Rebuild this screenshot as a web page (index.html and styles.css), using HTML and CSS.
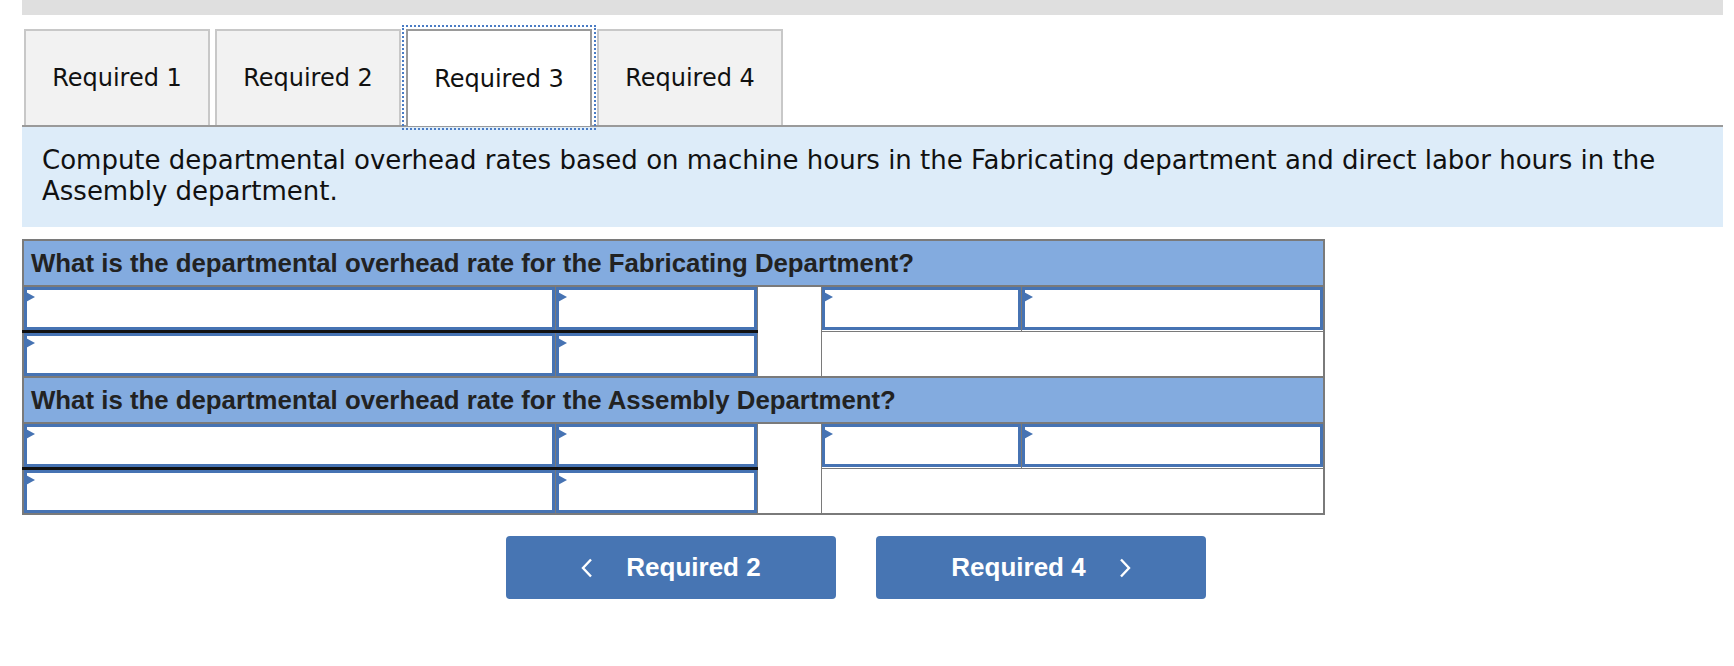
FILE: index.html
```html
<!DOCTYPE html>
<html lang="en">
<head>
<meta charset="utf-8">
<title>Required 3</title>
<link rel="stylesheet" href="styles.css">
</head>
<body>
<div class="page">
  <div class="topbar"></div>
  <div class="tabs">
    <div class="tab">Required 1</div>
    <div class="tab">Required 2</div>
    <div class="tab active">Required 3</div>
    <div class="tab">Required 4</div>
  </div>
  <div class="prompt">Compute departmental overhead rates based on machine hours in the Fabricating department and direct labor hours in the Assembly department.</div>
  <table class="grid">
    <colgroup>
      <col class="c1"><col class="c2"><col class="c3"><col class="c4"><col class="c5">
    </colgroup>
    <tr class="head"><th colspan="5">What is the departmental overhead rate for the Fabricating Department?</th></tr>
    <tr class="r1">
      <td class="sep"><div class="inp"></div></td>
      <td class="sep"><div class="inp"></div></td>
      <td rowspan="2" class="blank"></td>
      <td><div class="inp"></div></td>
      <td><div class="inp"></div></td>
    </tr>
    <tr class="r2">
      <td><div class="inp"></div></td>
      <td><div class="inp"></div></td>
      <td colspan="2" class="empty"></td>
    </tr>
    <tr class="head"><th colspan="5">What is the departmental overhead rate for the Assembly Department?</th></tr>
    <tr class="r1">
      <td class="sep"><div class="inp"></div></td>
      <td class="sep"><div class="inp"></div></td>
      <td rowspan="2" class="blank"></td>
      <td><div class="inp"></div></td>
      <td><div class="inp"></div></td>
    </tr>
    <tr class="r2">
      <td><div class="inp"></div></td>
      <td><div class="inp"></div></td>
      <td colspan="2" class="empty"></td>
    </tr>
  </table>
  <div class="nav">
    <button class="btn" type="button">
      <svg class="chev" width="12" height="20" viewBox="0 0 12 20"><polyline points="10,1.5 2,10 10,18.5" fill="none" stroke="#ffffff" stroke-width="2.4"/></svg>
      <span>Required 2</span>
    </button>
    <button class="btn" type="button">
      <span>Required 4</span>
      <svg class="chev" width="12" height="20" viewBox="0 0 12 20"><polyline points="2,1.5 10,10 2,18.5" fill="none" stroke="#ffffff" stroke-width="2.4"/></svg>
    </button>
  </div>
</div>
</body>
</html>
```

FILE: styles.css
```css
html, body {
  margin: 0;
  padding: 0;
  background: #ffffff;
}

.page {
  margin-left: 22px;
  width: 1701px;
  font-family: "DejaVu Sans", Verdana, sans-serif;
  color: #111111;
}

.topbar {
  height: 15px;
  background: #dfdfdf;
}

.tabs {
  display: flex;
  gap: 5px;
  margin-top: 14px;
  padding-left: 2px;
  height: 96px;
}

.tab {
  box-sizing: border-box;
  width: 186px;
  height: 96px;
  background: #f2f2f2;
  border: 2px solid #c8c8c8;
  border-bottom: none;
  display: flex;
  align-items: center;
  justify-content: center;
  font-size: 24px;
  color: #111111;
}

.tab.active {
  background: #ffffff;
  border-color: #9a9a9a;
  outline: 2px dotted #4a7cc4;
  outline-offset: 2px;
  position: relative;
  z-index: 1;
  height: 97px;
  margin-bottom: -1px;
}

.prompt {
  border-top: 2px solid #9a9a9a;
  background: #ddecf9;
  padding: 18px 20px 20px 20px;
  font-size: 26px;
  line-height: 31px;
  color: #111111;
}

.grid {
  margin-top: 12px;
  border-collapse: collapse;
  table-layout: fixed;
  width: 1303px;
  border: 2px solid #7a7a7a;
}

.c1 { width: 532px; }
.c2 { width: 201px; }
.c3 { width: 64px; }
.c4 { width: 200px; }
.c5 { width: 302px; }

.grid th {
  background: #83abdf;
  border: 2px solid #7a7a7a;
  height: 44px;
  padding: 0 0 0 7px;
  text-align: left;
  font-family: "Liberation Sans", Arial, sans-serif;
  font-weight: bold;
  font-size: 25.8px;
  color: #222222;
}

.grid td {
  border: 1px solid #7a7a7a;
  padding: 0;
  background: #ffffff;
  vertical-align: top;
}

.grid td.sep {
  border-bottom: 3px solid #111111;
}

.inp {
  position: relative;
  box-sizing: border-box;
  height: 43px;
  border: 3px solid #4673b3;
  background: #ffffff;
}

.r2 .inp {
  height: 43px;
}

.inp::before {
  content: "";
  position: absolute;
  left: -3px;
  top: 1px;
  width: 0;
  height: 0;
  border-top: 6px solid transparent;
  border-bottom: 6px solid transparent;
  border-left: 11px solid #4673b3;
}

.nav {
  display: flex;
  gap: 40px;
  margin-top: 21px;
  margin-left: 484px;
}

.btn {
  box-sizing: border-box;
  width: 330px;
  height: 63px;
  border: none;
  border-radius: 4px;
  background: #4775b3;
  color: #ffffff;
  display: flex;
  align-items: center;
  justify-content: center;
  gap: 33px;
  font-family: "Liberation Sans", Arial, sans-serif;
  font-weight: bold;
  font-size: 26px;
  padding: 0;
  cursor: pointer;
}

.chev {
  display: block;
}
```
